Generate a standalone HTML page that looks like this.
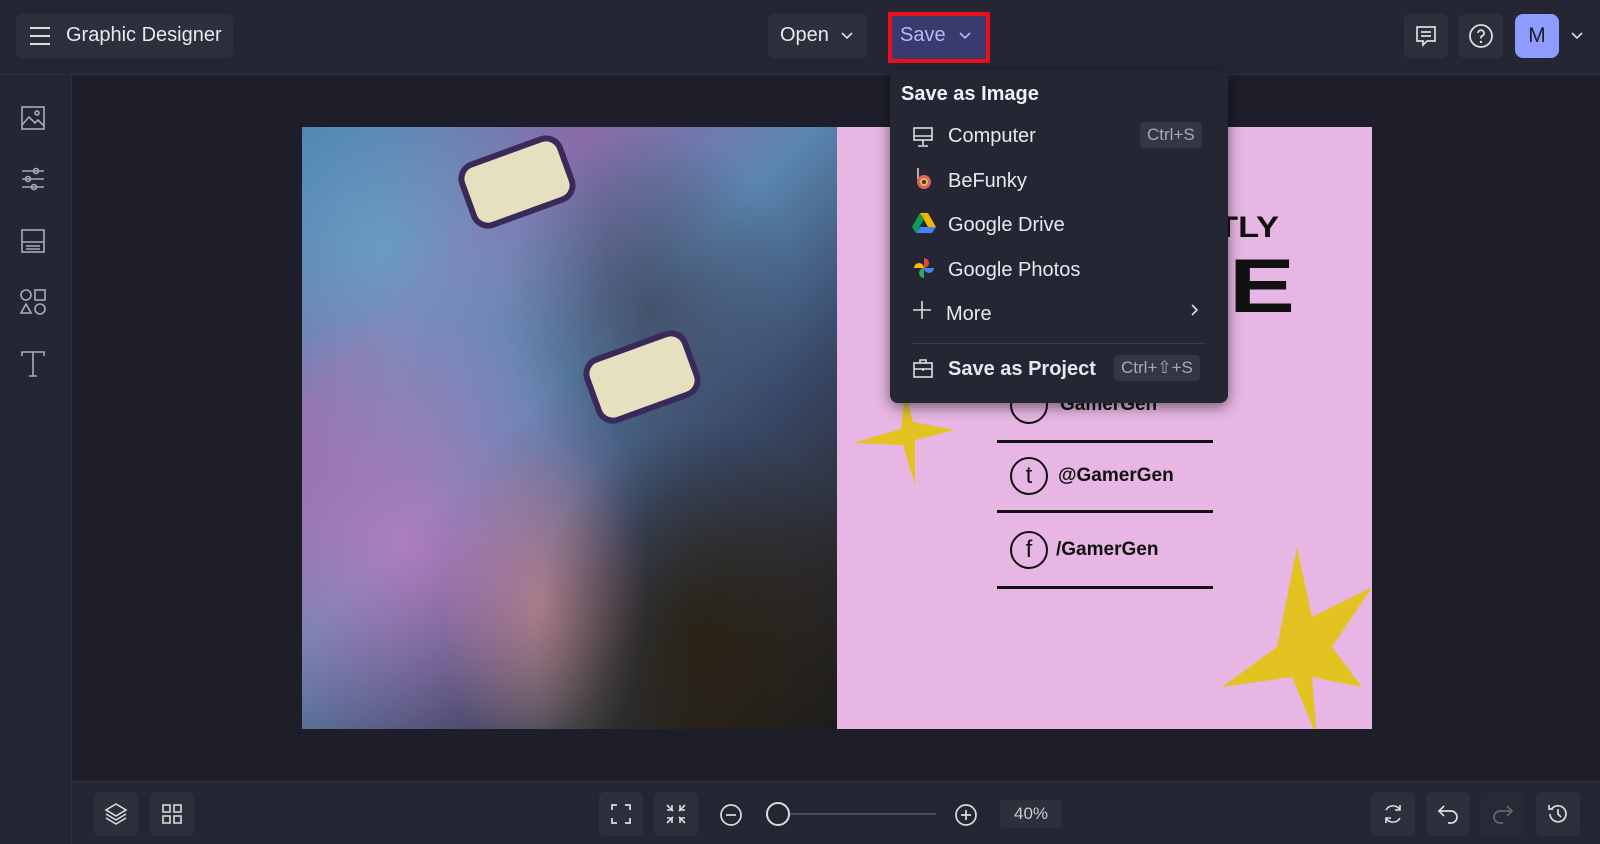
<!DOCTYPE html>
<html><head><meta charset="utf-8"><style>
*{margin:0;padding:0;box-sizing:border-box}
body{width:1600px;height:844px;background:#1d1e2a;font-family:"Liberation Sans",sans-serif;color:#e8e8ee;position:relative;overflow:hidden}
.abs{position:absolute}
.top{left:0;top:0;width:1600px;height:75px;background:#252633;border-bottom:1px solid #30313e}
.side{left:0;top:75px;width:72px;height:769px;background:#252633;border-right:1px solid #30313e}
.bot{left:72px;top:781px;width:1528px;height:63px;background:#252633;border-top:1px solid #30313e}
.btn{background:#2e2f3c;border-radius:6px}
.ic{stroke:#a9aab8;fill:none;stroke-width:1.6}
.menu{left:890px;top:70px;width:338px;height:333px;background:#252633;border-radius:8px;box-shadow:0 4px 14px rgba(0,0,0,.5)}
.mi{position:absolute;left:58px;font-size:20px;color:#e8e8ee}
.kb{position:absolute;background:#353645;border-radius:4px;color:#a8a9b6;font-size:17px;padding:3px 7px}
.soc{font-weight:bold;font-size:19px;color:#111;position:absolute}
.ln{position:absolute;left:997px;width:216px;height:3px;background:#111}
.circ{position:absolute;width:38px;height:38px;border:2px solid #111;border-radius:50%;font-size:24px;color:#111;text-align:center;line-height:33px}
</style></head><body>
<div class="abs top"></div>
<div class="abs side"></div>
<div class="abs bot"></div>
<div class="abs btn" style="left:16px;top:14px;width:217px;height:44px"></div>
<svg class="abs" style="left:28px;top:25px" width="24" height="22"><path d="M2 3h20M2 11h20M2 19h20" style="stroke:#ddd;stroke-width:2"/></svg>
<div class="abs" style="left:66px;top:24px;font-size:20px">Graphic Designer</div>
<div class="abs btn" style="left:768px;top:14px;width:99px;height:44px"></div>
<div class="abs" style="left:780px;top:24px;font-size:20px">Open</div>
<svg class="abs" style="left:840px;top:31px" width="14" height="10"><path d="M2 2l5 5 5-5" stroke="#ddd" fill="none" stroke-width="1.6"/></svg>
<div class="abs" style="left:888px;top:12px;width:102px;height:51px;border:4px solid #e8101a;background:#3a3a6e"></div>
<div class="abs" style="left:900px;top:24px;font-size:20px;color:#b9b8f5">Save</div>
<svg class="abs" style="left:958px;top:31px" width="14" height="10"><path d="M2 2l5 5 5-5" stroke="#b9b8f5" fill="none" stroke-width="1.6"/></svg>
<div class="abs btn" style="left:1404px;top:14px;width:44px;height:44px"></div>
<svg class="abs" style="left:1414px;top:24px" width="24" height="24"><path d="M3 3h18v14h-8l-4 4v-4H3z M7 8h10M7 12h10" stroke="#ddd" fill="none" stroke-width="1.7"/></svg>
<div class="abs btn" style="left:1459px;top:14px;width:44px;height:44px"></div>
<svg class="abs" style="left:1468px;top:23px" width="26" height="26"><circle cx="13" cy="13" r="11" stroke="#ddd" fill="none" stroke-width="1.8"/><path d="M10 10a3 3 0 1 1 4 3c-1 .5-1 1-1 2.5" stroke="#ddd" fill="none" stroke-width="1.8"/><circle cx="13" cy="19" r="1.2" fill="#ddd"/></svg>
<div class="abs" style="left:1515px;top:14px;width:44px;height:44px;background:#8f9cff;border-radius:8px;color:#1d1e2a;font-size:21px;text-align:center;line-height:44px">M</div>
<svg class="abs" style="left:1570px;top:31px" width="14" height="10"><path d="M2 2l5 5 5-5" stroke="#ddd" fill="none" stroke-width="1.6"/></svg>
<svg class="abs" style="left:20px;top:105px" width="26" height="26"><rect x="2" y="2" width="22" height="22" class="ic"/><path class="ic" d="M2 20l7-8 6 6 3-3 6 6"/><circle cx="17" cy="8" r="2" class="ic"/></svg>
<svg class="abs" style="left:20px;top:166px" width="26" height="26"><path class="ic" d="M2 5h22M2 13h22M2 21h22"/><circle cx="16" cy="5" r="2.5" fill="#252633" class="ic"/><circle cx="8" cy="13" r="2.5" fill="#252633" class="ic"/><circle cx="14" cy="21" r="2.5" fill="#252633" class="ic"/></svg>
<svg class="abs" style="left:20px;top:228px" width="26" height="26"><rect x="2" y="2" width="22" height="22" class="ic"/><path class="ic" d="M2 14h22M6 18h14M6 21h14"/></svg>
<svg class="abs" style="left:19px;top:288px" width="28" height="28"><circle cx="7" cy="7" r="5" class="ic"/><rect x="16" y="2" width="10" height="10" class="ic"/><path class="ic" d="M7 16l5 9H2z"/><circle cx="21" cy="21" r="5" class="ic"/></svg>
<svg class="abs" style="left:20px;top:350px" width="26" height="28"><path class="ic" d="M2 6V2h22v4M13 2v24M9 26h8"/></svg>
<div class="abs" style="left:302px;top:127px;width:535px;height:602px;overflow:hidden;background:linear-gradient(135deg,#4c79a8 0%,#8a6aa8 25%,#5a86b0 45%,#3a4a6a 65%,#2a2a30 85%,#1c1c1c 100%)">
<div class="abs" style="left:0;top:0;width:535px;height:602px;background:radial-gradient(ellipse at 20% 70%,rgba(230,120,200,.6),transparent 40%),radial-gradient(ellipse at 15% 20%,rgba(90,200,220,.5),transparent 35%),radial-gradient(ellipse at 65% 30%,rgba(60,60,80,.7),transparent 30%),radial-gradient(ellipse at 75% 85%,rgba(40,30,10,.8),transparent 30%),radial-gradient(ellipse at 45% 80%,rgba(210,160,120,.6),transparent 25%)"></div>
<div class="abs" style="left:160px;top:20px;width:110px;height:70px;background:#e6e0c0;border-radius:18px;transform:rotate(-20deg);border:6px solid #3a2a5a"></div>
<div class="abs" style="left:285px;top:215px;width:110px;height:70px;background:#e6e0c0;border-radius:18px;transform:rotate(-20deg);border:6px solid #3a2a5a"></div>
</div>
<div class="abs" style="left:837px;top:127px;width:535px;height:602px;background:#e8b6e4;overflow:hidden">
<div class="abs" style="left:380px;top:84px;font-size:30px;font-weight:bold;color:#111;transform:scaleX(1.15);transform-origin:left">TLY</div>
<div class="abs" style="left:392px;top:122px;font-size:76px;font-weight:bold;color:#111;line-height:76px;transform:scaleX(1.3);transform-origin:left">E</div>
<svg class="abs" style="left:10px;top:260px" width="120" height="100"><path d="M58 5l8 30 42 8-40 10 0 45-12-40-50-2 48-14z" fill="#e2c322"/></svg>
<svg class="abs" style="left:380px;top:420px" width="160" height="190"><path d="M80 0l15 70 60-30-40 60 30 40-50-10 5 60-25-60-70 10 55-40z" fill="#e2c322"/></svg>
</div>
<div class="circ" style="left:1010px;top:386px"></div>
<div class="soc" style="left:1060px;top:394px">GamerGen</div>
<div class="ln" style="top:440px"></div>
<div class="ln" style="top:510px"></div>
<div class="ln" style="top:586px"></div>
<div class="circ" style="left:1010px;top:457px">t</div>
<div class="soc" style="left:1058px;top:465px">@GamerGen</div>
<div class="circ" style="left:1010px;top:531px">f</div>
<div class="soc" style="left:1056px;top:539px">/GamerGen</div>
<div class="abs menu">
<div class="abs" style="left:11px;top:13px;font-size:20px;font-weight:bold;color:#f0f0f5">Save as Image</div>
<svg class="abs" style="left:22px;top:56px" width="22" height="22"><rect x="2" y="2" width="18" height="12" style="stroke:#ddd;fill:none;stroke-width:1.6"/><path d="M11 14v5M6 20h10M2 10h18" stroke="#ddd" fill="none" stroke-width="1.6"/></svg>
<div class="mi" style="top:55px">Computer</div>
<div class="kb" style="left:250px;top:52px">Ctrl+S</div>
<svg class="abs" style="left:23px;top:97px" width="22" height="24"><path d="M5 1v12" stroke="#ddd" stroke-width="1.5"/><circle cx="11" cy="15" r="7" fill="#e06060"/><circle cx="11" cy="15" r="4" fill="#e0c040"/><circle cx="11" cy="15" r="2" fill="#333"/></svg>
<div class="mi" style="top:100px">BeFunky</div>
<svg class="abs" style="left:21px;top:142px" width="26" height="22"><path d="M9 1h8l8 14H17z" fill="#f5b400"/><path d="M9 1L1 15l4 6 8-14z" fill="#0f9d58"/><path d="M5 21h16l4-6H9z" fill="#4285f4"/></svg>
<div class="mi" style="top:144px">Google Drive</div>
<svg class="abs" style="left:22px;top:186px" width="24" height="24"><path d="M12 12V2a5 5 0 0 1 0 10z" fill="#ea4335"/><path d="M12 12h10a5 5 0 0 1-10 0z" fill="#4285f4"/><path d="M12 12v10a5 5 0 0 1 0-10z" fill="#34a853"/><path d="M12 12H2a5 5 0 0 1 10 0z" fill="#fbbc04"/></svg>
<div class="mi" style="top:189px">Google Photos</div>
<svg class="abs" style="left:22px;top:230px" width="20" height="20"><path d="M10 1v18M1 10h18" stroke="#ddd" stroke-width="1.6"/></svg>
<div class="mi" style="top:233px;left:56px">More</div>
<svg class="abs" style="left:300px;top:233px" width="10" height="14"><path d="M2 2l5 5-5 5" stroke="#ddd" fill="none" stroke-width="1.6"/></svg>
<div class="abs" style="left:22px;top:273px;width:294px;height:1px;background:#3a3b48"></div>
<svg class="abs" style="left:22px;top:287px" width="22" height="22"><rect x="2" y="6" width="18" height="14" stroke="#ddd" fill="none" stroke-width="1.6"/><path d="M8 6V3h6v3M2 12h18M11 11v3" stroke="#ddd" fill="none" stroke-width="1.6"/></svg>
<div class="mi" style="top:288px;font-weight:bold">Save as Project</div>
<div class="kb" style="left:224px;top:285px">Ctrl+⇧+S</div>
</div>
<div class="abs btn" style="left:94px;top:792px;width:44px;height:44px"></div>
<svg class="abs" style="left:104px;top:802px" width="24" height="24"><path d="M12 2l10 6-10 6-10-6z M2 12l10 6 10-6M2 16l10 6 10-6" stroke="#ddd" fill="none" stroke-width="1.6"/></svg>
<div class="abs btn" style="left:150px;top:792px;width:44px;height:44px"></div>
<svg class="abs" style="left:160px;top:802px" width="24" height="24"><path d="M3 3h7v7H3zM14 3h7v7h-7zM3 14h7v7H3zM14 14h7v7h-7z" stroke="#ddd" fill="none" stroke-width="1.6"/></svg>
<div class="abs btn" style="left:599px;top:792px;width:44px;height:44px"></div>
<svg class="abs" style="left:610px;top:803px" width="22" height="22"><path d="M2 7V2h5M15 2h5v5M20 15v5h-5M7 20H2v-5" stroke="#ddd" fill="none" stroke-width="1.7"/></svg>
<div class="abs btn" style="left:654px;top:792px;width:44px;height:44px"></div>
<svg class="abs" style="left:665px;top:803px" width="22" height="22"><path d="M2 7h5V2M8 8L2 2M15 2v5h5M14 8l6-6M20 15h-5v5M14 14l6 6M7 20v-5H2M8 14l-6 6" stroke="#ddd" fill="none" stroke-width="1.6"/></svg>
<svg class="abs" style="left:719px;top:803px" width="24" height="24"><circle cx="12" cy="12" r="10" stroke="#ddd" fill="none" stroke-width="1.7"/><path d="M7 12h10" stroke="#ddd" stroke-width="1.7"/></svg>
<div class="abs" style="left:770px;top:813px;width:166px;height:2px;background:#4a4b58"></div>
<div class="abs" style="left:766px;top:802px;width:24px;height:24px;border:2.5px solid #ddd;border-radius:50%;background:#252633"></div>
<svg class="abs" style="left:954px;top:803px" width="24" height="24"><circle cx="12" cy="12" r="10" stroke="#ddd" fill="none" stroke-width="1.7"/><path d="M7 12h10M12 7v10" stroke="#ddd" stroke-width="1.7"/></svg>
<div class="abs" style="left:1000px;top:800px;width:62px;height:28px;background:#2e2f3c;border-radius:4px;font-size:17px;color:#ccc;text-align:center;line-height:28px">40%</div>
<div class="abs btn" style="left:1371px;top:792px;width:44px;height:44px"></div>
<svg class="abs" style="left:1381px;top:802px" width="24" height="24"><path d="M19 8A8 8 0 0 0 5 8M5 16a8 8 0 0 0 14 0M19 3v5h-5M5 21v-5h5" stroke="#ddd" fill="none" stroke-width="1.6"/></svg>
<div class="abs btn" style="left:1426px;top:792px;width:44px;height:44px"></div>
<svg class="abs" style="left:1436px;top:802px" width="24" height="24"><path d="M8 4L3 9l5 5M3 9h12a6 6 0 0 1 0 12h-3" stroke="#ddd" fill="none" stroke-width="1.7"/></svg>
<div class="abs btn" style="left:1481px;top:792px;width:44px;height:44px;background:#282936"></div>
<svg class="abs" style="left:1491px;top:802px" width="24" height="24"><path d="M16 4l5 5-5 5M21 9H9a6 6 0 0 0 0 12h3" stroke="#666" fill="none" stroke-width="1.7"/></svg>
<div class="abs btn" style="left:1536px;top:792px;width:44px;height:44px"></div>
<svg class="abs" style="left:1546px;top:802px" width="24" height="24"><path d="M4 12a8 8 0 1 0 2-5.5M3 3v4h4M12 7v5l3 3" stroke="#ddd" fill="none" stroke-width="1.7"/></svg>
</body></html>
